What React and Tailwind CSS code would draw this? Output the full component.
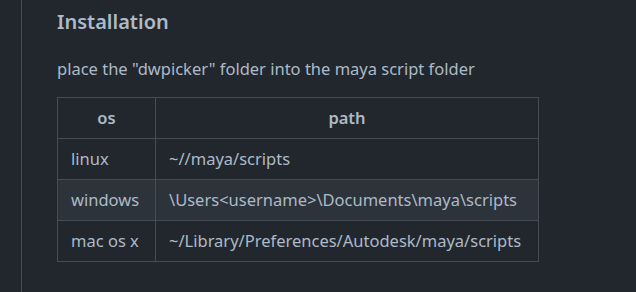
const rows = [
  { os: 'linux', path: '~//maya/scripts' },
  { os: 'windows', path: '\\Users<username>\\Documents\\maya\\scripts' },
  { os: 'mac os x', path: '~/Library/Preferences/Autodesk/maya/scripts' },
];

export default function App() {
  return (
    <div
      className="flex h-[292px] w-[636px] overflow-hidden bg-[#22272e] text-[#adbac7]"
      style={{ fontFamily: '"Noto Sans", "Open Sans", sans-serif' }}
    >
      <div className="w-[21px] shrink-0" />
      <div className="flex-1 border-l border-[#444c56] pl-[35px]">
        <h3 className="mt-[7px] text-[20px] font-semibold leading-[30px]">Installation</h3>
        <p className="mt-[20px] text-[16.5px] leading-[24px]">
          place the "dwpicker" folder into the maya script folder
        </p>
        <table className="mt-[16px] w-[482px] border-collapse text-[16.5px] leading-[24px]">
          <thead>
            <tr>
              <th className="w-[98px] border border-[#444c56] px-[13px] py-[8px] text-center font-semibold">os</th>
              <th className="border border-[#444c56] px-[13px] py-[8px] text-center font-semibold">path</th>
            </tr>
          </thead>
          <tbody>
            {rows.map((r, i) => (
              <tr key={r.os} className={i === 1 ? 'bg-[#2d333b]' : ''}>
                <td className="border border-[#444c56] px-[13px] py-[8px] whitespace-nowrap">{r.os}</td>
                <td className="border border-[#444c56] px-[13px] py-[8px] whitespace-nowrap">{r.path}</td>
              </tr>
            ))}
          </tbody>
        </table>
      </div>
    </div>
  );
}
